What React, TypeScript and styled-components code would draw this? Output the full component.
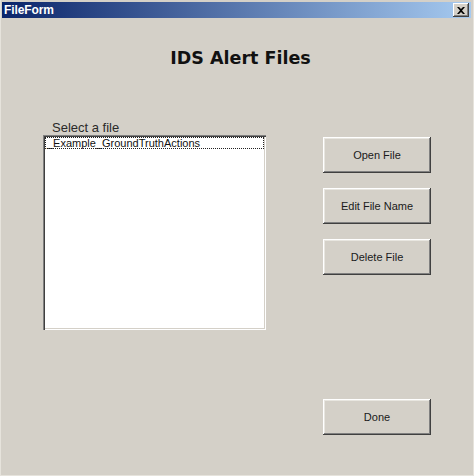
import React from "react";
import styled, { createGlobalStyle } from "styled-components";

const GlobalStyle = createGlobalStyle`
  html, body {
    margin: 0;
    padding: 0;
    background: #d4d0c8;
  }
`;

const Window = styled.div`
  width: 474px;
  height: 476px;
  box-sizing: border-box;
  padding: 2px 2px 2px 1px;
  background: #d4d0c8;
  border: 1px solid #e6e3dc;
  border-top: none;
  display: flex;
  flex-direction: column;
`;

const TitleBar = styled.div`
  height: 16px;
  display: flex;
  align-items: center;
  justify-content: space-between;
  padding: 0 2px 0 2px;
  background: linear-gradient(to right, #0a246a, #a6caf0);
`;

const Caption = styled.span`
  font-family: "Liberation Sans", Arial, sans-serif;
  font-weight: 700;
  font-size: 12px;
  color: #ffffff;
  letter-spacing: -0.1px;
`;

const CloseButton = styled.div`
  width: 16px;
  height: 14px;
  box-sizing: border-box;
  background: #d4d0c8;
  display: flex;
  align-items: center;
  justify-content: center;
  box-shadow: inset -1px -1px #404040, inset 1px 1px #ffffff,
    inset -2px -2px #808080;
`;

const Body = styled.div`
  flex: 1;
  display: flex;
  flex-direction: column;
  padding: 0 0 0 41px;
`;

const Heading = styled.h1`
  margin: 30px 0 0 -41px;
  font-family: "DejaVu Sans", Verdana, sans-serif;
  font-weight: 700;
  font-size: 17.5px;
  line-height: 20px;
  text-align: center;
  color: #111111;
  padding-left: 8px;
`;

const Content = styled.div`
  display: flex;
  gap: 57px;
  margin-top: 53px;
`;

const ListColumn = styled.div`
  display: flex;
  flex-direction: column;
`;

const Label = styled.label`
  font-family: "Liberation Sans", Arial, sans-serif;
  font-size: 13px;
  line-height: 14px;
  color: #2a2a2a;
  padding-left: 9px;
`;

const ListBox = styled.div`
  width: 223px;
  height: 195px;
  box-sizing: border-box;
  background: #ffffff;
  padding: 2px;
  box-shadow: inset 1px 1px #808080, inset 2px 2px #404040,
    inset -1px -1px #ffffff, inset -2px -2px #d4d0c8;
`;

const ListItem = styled.div<{ focused?: boolean }>`
  font-family: "Liberation Sans", Arial, sans-serif;
  font-size: 11px;
  line-height: 11px;
  color: #111111;
  padding: 0 0 0 1px;
  height: 12px;
  box-sizing: border-box;
  border: 1px dotted ${(props) => (props.focused ? "#222222" : "transparent")};
`;

const ButtonColumn = styled.div`
  display: flex;
  flex-direction: column;
  padding-top: 16px;
  gap: 15px;
`;

const Button = styled.button<{ push?: number }>`
  width: 108px;
  height: 36px;
  margin-top: ${(props) => props.push || 0}px;
  box-sizing: border-box;
  border: none;
  background: #d4d0c8;
  font-family: "Liberation Sans", Arial, sans-serif;
  font-size: 11px;
  color: #1a1a1a;
  padding: 0;
  box-shadow: inset -1px -1px #404040, inset 1px 1px #ffffff,
    inset -2px -2px #808080, inset 2px 2px #e8e6e0;
`;

export default function App() {
  return (
    <>
      <GlobalStyle />
      <Window>
        <TitleBar>
          <Caption>FileForm</Caption>
          <CloseButton>
            <svg width="8" height="7" viewBox="0 0 8 7">
              <path d="M0 0h2l2 2 2-2h2L5 3.5 8 7H6L4 5 2 7H0l3-3.5z" fill="#000" />
            </svg>
          </CloseButton>
        </TitleBar>
        <Body>
          <Heading>IDS Alert Files</Heading>
          <Content>
            <ListColumn>
              <Label>Select a file</Label>
              <ListBox>
                <ListItem focused>_Example_GroundTruthActions</ListItem>
              </ListBox>
            </ListColumn>
            <ButtonColumn>
              <Button>Open File</Button>
              <Button>Edit File Name</Button>
              <Button>Delete File</Button>
              <Button push={109}>Done</Button>
            </ButtonColumn>
          </Content>
        </Body>
      </Window>
    </>
  );
}
